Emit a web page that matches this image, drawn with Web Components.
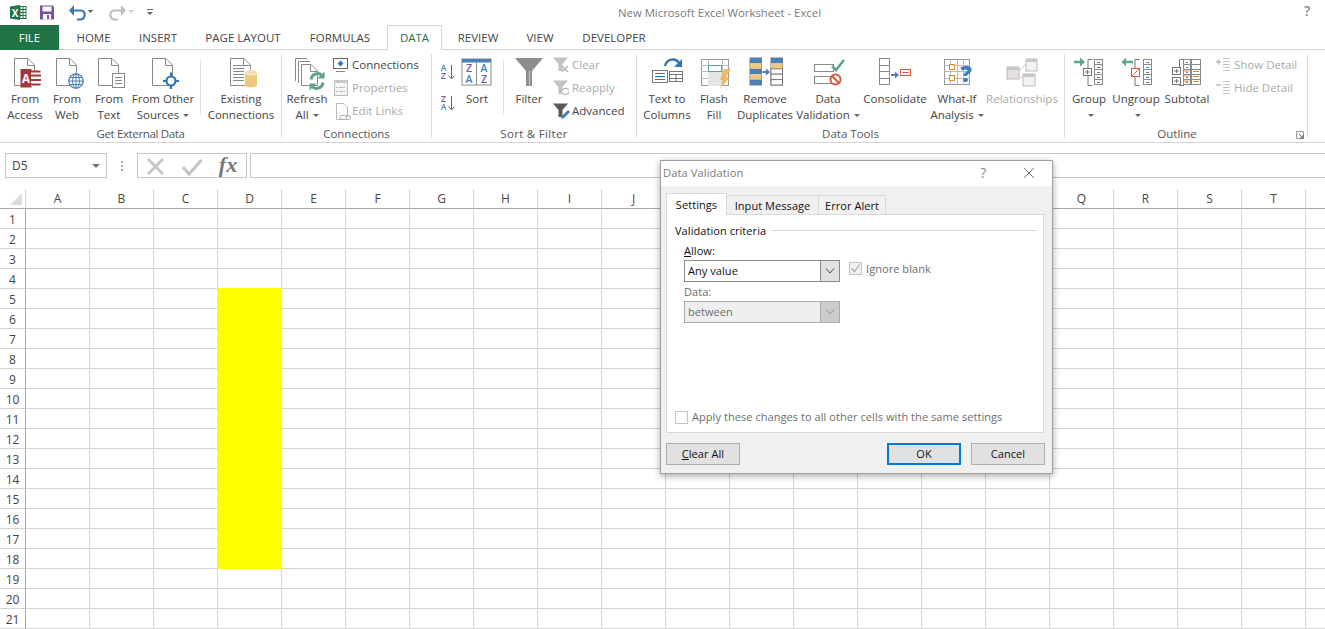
<!DOCTYPE html>
<html><head><meta charset="utf-8"><title>Excel</title>
<style>
html,body{margin:0;height:100%;background:#fff;overflow:hidden}
body{font-family:"Open Sans","Liberation Sans",sans-serif;font-size:11.5px;color:#444}
</style></head><body>
<xl-app>
  <xl-titlebar>New Microsoft Excel Worksheet - Excel</xl-titlebar>
  <xl-tabs>
    <xl-tab w="59" kind="file">FILE</xl-tab><xl-tab w="69">HOME</xl-tab><xl-tab w="60">INSERT</xl-tab><xl-tab w="110">PAGE LAYOUT</xl-tab><xl-tab w="84">FORMULAS</xl-tab><xl-tab w="55" kind="active" ml="5">DATA</xl-tab><xl-tab w="72">REVIEW</xl-tab><xl-tab w="52">VIEW</xl-tab><xl-tab w="96">DEVELOPER</xl-tab>
  </xl-tabs>
  <xl-ribbon>
    <xl-group w="282" pl="4" ls="-.35" label="Get External Data">
      <xl-cmd w="42" icon="access">From<br>Access</xl-cmd>
      <xl-cmd w="42" icon="web">From<br>Web</xl-cmd>
      <xl-cmd w="42" icon="text">From<br>Text</xl-cmd>
      <xl-cmd w="66" icon="other">From Other<br>Sources<xl-caret></xl-caret></xl-cmd>
      <xl-vsep ml="4" mr="3"></xl-vsep>
      <xl-cmd w="74" icon="existing">Existing<br>Connections</xl-cmd>
    </xl-group>
    <xl-group w="150" pl="2" label="Connections">
      <xl-cmd w="46" icon="refresh">Refresh<br>All<xl-caret></xl-caret></xl-cmd>
      <xl-stack ml="3">
        <xl-small icon="conn">Connections</xl-small>
        <xl-small icon="props" disabled>Properties</xl-small>
        <xl-small icon="links" disabled>Edit Links</xl-small>
      </xl-stack>
    </xl-group>
    <xl-group w="205" ls=".3" label="Sort &amp; Filter">
      <xl-sortstack></xl-sortstack>
      <xl-cmd w="30" icon="sort">Sort</xl-cmd>
      <xl-vsep ml="11" mr="6"></xl-vsep>
      <xl-cmd w="38" icon="filter">Filter</xl-cmd>
      <xl-stack ml="5">
        <xl-small icon="clear" disabled>Clear</xl-small>
        <xl-small icon="reapply" disabled>Reapply</xl-small>
        <xl-small icon="advanced">Advanced</xl-small>
      </xl-stack>
    </xl-group>
    <xl-group w="428" pl="5" label="Data Tools">
      <xl-cmd w="50" icon="t2c">Text to<br>Columns</xl-cmd>
      <xl-cmd w="44" icon="flash">Flash<br>Fill</xl-cmd>
      <xl-cmd w="58" icon="dup">Remove<br>Duplicates</xl-cmd>
      <xl-cmd w="64" ml="2" icon="valid">Data<br>Validation<xl-caret></xl-caret></xl-cmd>
      <xl-cmd w="70" icon="cons">Consolidate</xl-cmd>
      <xl-cmd w="54" icon="whatif">What-If<br>Analysis<xl-caret></xl-caret></xl-cmd>
      <xl-cmd w="76" icon="rel" disabled>Relationships</xl-cmd>
    </xl-group>
    <xl-group w="243" pl="3" pr="18" label="Outline" launcher>
      <xl-cmd w="42" icon="group">Group<br><xl-caret></xl-caret></xl-cmd>
      <xl-cmd w="52" icon="ungroup">Ungroup<br><xl-caret></xl-caret></xl-cmd>
      <xl-cmd w="50" icon="subtotal">Subtotal</xl-cmd>
      <xl-stack ml="3">
        <xl-small icon="show" disabled>Show Detail</xl-small>
        <xl-small icon="hide" disabled>Hide Detail</xl-small>
      </xl-stack>
    </xl-group>
  </xl-ribbon>
  <xl-formula>D5</xl-formula>
  <xl-sheet></xl-sheet>
  <xl-dialog></xl-dialog>
</xl-app>
<script>
const G='#8a8a8a';
const page=(x,y,w,h,c=G,f=7)=>`<path d="M${x+.5} ${y+.5}H${x+w-f}L${x+w-.5} ${y+f}V${y+h-.5}H${x+.5}Z" fill="#fff" stroke="${c}"/><path d="M${x+w-f-.5} ${y+.5}V${y+f+.5}H${x+w-.5}" fill="none" stroke="${c}"/>`;
const lines=(x1,x2,ys,c=G)=>ys.map(y=>`<path d="M${x1} ${y+.5}H${x2}" stroke="${c}"/>`).join('');
const rect=(x,y,w,h,s=G,f='#fff')=>`<rect x="${x+.5}" y="${y+.5}" width="${w-1}" height="${h-1}" fill="${f}" stroke="${s}"/>`;
const BL='#4a7fb8',OR='#e08a2e',RD='#d9573a',TN='#edc87e',GN='#5fa38a';
const L=(d,c,w=1)=>`<path d="${d}" fill="none" stroke="${c}" stroke-width="${w}"/>`;
const T=(x,y,s,c,size,extra='')=>`<text x="${x}" y="${y}" fill="${c}" font-size="${size}" font-family="Open Sans,Liberation Sans,sans-serif" text-anchor="middle" ${extra}>${s}</text>`;
const outlineCol=(x,y,w,h,n,dash)=>{let s=rect(x,y,w,h,'#8a8a8a');const rh=(h-1)/n;for(let i=1;i<n;i++)s+=L(`M${x} ${y+.5+Math.round(rh*i)}H${x+w}`,'#8a8a8a');if(dash)for(let i=0;i<n;i++)s+=L(`M${x+3} ${y+.5+Math.round(rh*i+rh/2)}H${x+w-3}`,BL,1);return s};
const ICONS={
access:page(5,2,21,28)+`<rect x="11.5" y="13" width="11" height="18.5" fill="#a4373a"/><rect x="22" y="15" width="10" height="15" fill="#fff"/><path d="M22 15.5h9.5M22 19.5h10M22 24h10M22 28.5h9.5" stroke="#a4373a" stroke-width="2"/>`+T(17,26.5,'A','#fff',11.5,'font-weight="700"'),
web:page(5,2,21,28)+`<circle cx="25" cy="25" r="7.2" fill="#fff" stroke="${BL}" stroke-width="1.3"/><ellipse cx="25" cy="25" rx="3.4" ry="7.2" fill="none" stroke="${BL}"/><path d="M25 18v14M18 25h14M19 21.5h12M19 28.5h12" stroke="${BL}"/>`,
text:page(5,2,21,28)+rect(19,17,13,15)+lines(22,29,[21,24,27]),
other:page(5,2,21,28)+`<circle cx="24" cy="25" r="4.5" fill="#fff" stroke="#2f75b5" stroke-width="2.2"/><path d="M16 25h3.5M28.500 25h3.500M24 16.500v3.500M24 29.500v3.500" stroke="#2f75b5" stroke-width="2.2"/>`,
existing:page(5,2,21,28)+lines(8,19,[9,12,15,18,21,24])+`<path d="M20 17v12c0 3 12 3 12 0V17z" fill="${TN}"/><ellipse cx="26" cy="16.500" rx="6" ry="2.500" fill="#f3d9a0" stroke="#fff" stroke-width=".8"/>`,
refresh:L('M4.500 25V2.500H16',G)+L('M7.500 27V5.500H19',G)+page(10,8,17,22)+`<path d="M20 23.500a6.500 6.500 0 0 1 11-4" fill="none" stroke="${GN}" stroke-width="3"/><path d="M33.500 15.500v7h-7z" fill="${GN}"/><path d="M32 26.500a6.500 6.500 0 0 1-11 4" fill="none" stroke="${GN}" stroke-width="3"/><path d="M18.500 34.500v-7h7z" fill="${GN}"/>`,
conn:rect(0,1,15,11,'#666')+`<path d="M3 14.500h9" stroke="#888"/><path d="M7.500 3.500l3 3-3 3-3-3z" fill="#2f75b5"/>`,
props:rect(1,0,14,16,'#bbb','#f4f4f4')+`<rect x="1" y="0" width="14" height="3" fill="#c8c8c8"/><path d="M6 7.500h6M6 11.500h6" stroke="#bbb"/><path d="M3 7.500h1.500M3 11.500h1.500" stroke="#aaa"/>`,
links:`<path d="M3.500 .5H11L14.500 4V14M8 16.500H3.500V.5" fill="#fff" stroke="#bbb"/><path d="M9 12.500h2.500a2 2 0 0 1 0 4H9a2 2 0 0 1 0-4zM13 12.500h2.500a2 2 0 0 1 0 4H13" fill="none" stroke="#aaa"/>`,
az:T(4.500,7,'A',"#3f7fc1",8.500,'font-weight="600"')+T(4.500,15,'Z','#7b4fa3',8.500,'font-weight="600"')+L('M12.500 1v13M9.500 11.500l3 3.500 3-3.500','#666'),
za:T(4.500,7,'Z','#7b4fa3',8.500,'font-weight="600"')+T(4.500,15,'A','#3f7fc1',8.500,'font-weight="600"')+L('M12.500 1v13M9.500 11.500l3 3.500 3-3.500','#666'),
sort:`<rect x="1" y="3" width="29" height="26" fill="#fff" stroke="#8a8a8a"/><rect x="1" y="3" width="29" height="3.500" fill="#4a7fb8"/><path d="M15.500 6v23" stroke="#8a8a8a"/>`+T(8,16,'Z','#7b4fa3',10.500,'font-weight="600"')+T(8,27,'A','#3f7fc1',10.500,'font-weight="600"')+T(23,16,'A','#3f7fc1',10.500,'font-weight="600"')+T(23,27,'Z','#7b4fa3',10.500,'font-weight="600"'),
filter:`<path d="M2 2h28L19 15v15h-6V15z" fill="#8c8c8c"/><path d="M16.500 15v15" stroke="#bdbdbd" stroke-width="1.500"/>`,
clear:`<path d="M0 .5h15L9.500 7v7h-4V7z" fill="#c2c2c2"/><path d="M9 9l6 6M15 9l-6 6" stroke="#b5b5b5" stroke-width="1.500"/>`,
reapply:`<path d="M0 .5h15L9.500 7v7h-4V7z" fill="#c2c2c2"/><path d="M9 11a4 4 0 0 1 7-1M16 12a4 4 0 0 1-7 1" stroke="#b5b5b5" fill="none" stroke-width="1.200"/>`,
advanced:`<path d="M0 .5h15L9.500 7v7h-4V7z" fill="#5a5a5a"/><path d="M8 16l1-3 6-6 2 2-6 6z" fill="#3e7cc0"/>`,
t2c:rect(1,14,16,13,'#777')+lines(4,14,[17,20,23],'#2f75b5')+rect(18,15,14,11,'#777')+`<path d="M18 18.500h14M18 22.500h14M25 18v8" stroke="#777"/><path d="M14 10c2-8 11-8 14-3" fill="none" stroke="#2f75b5" stroke-width="2.400"/><path d="M31 3v8h-8z" fill="#2f75b5"/>`,
flash:rect(3,3,28,27,'#999')+`<path d="M3 9.500h28M3 15.500h28M3 22.500h28M10.500 3v27M24.500 3v27" stroke="#bbb"/><rect x="10" y="16" width="14" height="14" fill="#e4e4e4"/>`+rect(10,9,14,7,'#5fa38a')+`<path d="M26 13h7l-5 8h4L22 33l3-9h-3z" fill="#f0b860"/>`,
dup:(()=>{const c=(x,a)=>{let s=`<rect x="${x}" y="2" width="11.500" height="27" fill="#fff" stroke="#7a7a7a"/>`;a.forEach((k,i)=>s+=`<rect x="${x}" y="${2+i*5.400}" width="11.500" height="5.400" fill="${k}" stroke="${k=='#fff'?'#7a7a7a':'none'}"/>`);return s};return c(1,[BL,TN,BL,TN,BL])+c(22,[BL,TN,'#fff','#fff','#fff'])+`<path d="M13.500 16h4" stroke="${BL}" stroke-width="2"/><path d="M17 12.500l4 3.500-4 3.500z" fill="${BL}"/>`})(),
valid:rect(2,8,20,8,G)+rect(2,20,20,8,G)+`<path d="M20 10l4 4 8-10" fill="none" stroke="${GN}" stroke-width="2.600"/><circle cx="23.500" cy="23.500" r="5" fill="#fff" stroke="${RD}" stroke-width="2"/><path d="M20 20l7 7" stroke="${RD}" stroke-width="2"/>`,
cons:outlineCol(0,2,11,27,4)+`<path d="M12 19h5" stroke="${BL}" stroke-width="2"/><path d="M16 15.500l4 3.500-4 3.500z" fill="${BL}"/>`+rect(21,13,11,7,RD)+L('M23.500 16.500h6',RD),
whatif:rect(3,3,26,26,'#999')+`<path d="M3 9.500h26M3 15.500h26M3 22.500h26M9.500 3v26M16.500 3v26M22.500 3v26" stroke="#bbb"/>`+rect(8,8,6,6,OR)+rect(8,19,6,6,OR)+T(25,26,'?','#3e7cc0',23,'font-weight="800"'),
rel:`<rect x="1" y="11" width="12" height="12" fill="#e6e0e6" stroke="#bbb"/><rect x="1" y="11" width="12" height="3" fill="#c8c8c8"/><rect x="20" y="3" width="11" height="12" fill="#f3f3f3" stroke="#bbb"/><rect x="20" y="3" width="11" height="3" fill="#c8c8c8"/><rect x="17" y="18" width="12" height="12" fill="#f3f3f3" stroke="#bbb"/><rect x="17" y="18" width="12" height="3" fill="#c8c8c8"/><path d="M13 15l7-7M13 19l4 4" stroke="#c8c8c8"/>`,
group:`<path d="M1 6h8" stroke="${GN}" stroke-width="2.500"/><path d="M7 1.500l5 4.500-5 4.500z" fill="${GN}"/>`+L('M19.500 3.500H15V12M15 20v9.500H19.500','#777')+rect(10,12,9,8,'#777')+L('M12 16h5M14.500 14v4','#777')+outlineCol(21,3,9,26,5,1),
ungroup:`<path d="M4 6h9" stroke="${GN}" stroke-width="2.500"/><path d="M6 1.500L1.500 6 6 10.500z" fill="${GN}"/>`+L('M19.500 3.500H15V12M15 20v9.500H19.500','#777')+rect(11,12,9,9,RD)+L('M12 20l7-7',RD)+outlineCol(23,3,9,26,5,1),
subtotal:L('M8.500 11V3.500H13M8.500 21v8.500H13','#777')+rect(1,11,9,8,'#777')+L('M3 15h5M5.500 13v4','#777')+rect(1,21,9,8,'#777')+L('M3 25h5M5.500 23v4','#777')+outlineCol(12,3,8,26,5,1)+rect(20,3,10,26,'#8a8a8a')+`<path d="M20 8.500h10M20 13.500h10M20 18.500h10M20 23.500h10" stroke="#8a8a8a"/><path d="M22 15.500h6M22 20.500h6M22 25.500h6" stroke="${OR}"/>`+`<path d="M12.500 15h6M12.500 20h6M12.500 25h6" stroke="${OR}"/>`,
show:`<path d="M1 5h5M3.500 2.500v5" stroke="#bbb" stroke-width="1.500"/>`+lines(8,15,[1,4,7,10,13],'#c4c4c4'),
hide:`<path d="M1 5h5" stroke="#bbb" stroke-width="1.500"/>`+lines(8,15,[1,4,7,10,13],'#c4c4c4'),
};
function def(name,css,html,init){customElements.define(name,class extends HTMLElement{
  constructor(){super();this.attachShadow({mode:'open'})}
  connectedCallback(){const a=n=>this.getAttribute(n);this.shadowRoot.innerHTML=`<style>${css}</style>`+(typeof html=='function'?html(a,this):html);init&&init(this,a)}
})}
def('xl-app',':host{display:block;position:relative;width:1325px;height:629px;overflow:hidden}','<slot></slot>');
def('xl-titlebar',`:host{display:flex;align-items:center;height:25px;position:relative;color:#7a7a7a;font-size:11.35px}
 svg{display:block;overflow:visible}.t{margin-left:466px;width:205px;text-align:center;white-space:nowrap}.h{margin-left:482px;margin-top:-4px;font-size:14px;font-weight:600;color:#888}
 .q{display:flex;align-items:center;margin-left:9px;gap:0}`,
 `<div class="q"><svg width="142" height="20" viewBox="0 0 142 20">
 <rect x="9" y="2" width="8" height="14" fill="#fff"/><rect x="11" y="3.500" width="6" height="12" fill="#fff" stroke="#217346"/><path d="M11 6.500h6M11 9.500h6M11 12.500h6M14 3.500v12" stroke="#217346"/>
 <path d="M1 3.500L11 2v15L1 15.500z" fill="#217346"/><text x="6" y="13.500" fill="#fff" font-size="10" font-weight="700" text-anchor="middle" font-family="Open Sans,sans-serif">X</text>
 <path d="M31 2.500h12.500l1.500 1.500v12.500H31z" fill="#7d4f9f"/><rect x="33.500" y="3.500" width="9" height="5" fill="#fff"/><rect x="34" y="11" width="8" height="5.500" fill="#fff"/><rect x="38" y="12" width="2" height="4" fill="#7d4f9f"/>
 <path d="M64 7.500h8c5 0 5 9 -1 9h-3" fill="none" stroke="#3a76b8" stroke-width="2.200"/><path d="M65 2L60 7.500 65 13z" fill="#3a76b8"/>
 <path d="M78.500 8l3 3 3-3z" transform="translate(0 -1)" fill="#666"/>
 <path d="M113 7.500h-8c-5 0-5 9 1 9h3" fill="none" stroke="#bdbdbd" stroke-width="2.200"/><path d="M112 2l5 5.500-5 5.500z" fill="#bdbdbd"/>
 <path d="M119.500 8l3 3 3-3z" transform="translate(0 -1)" fill="#ccc"/>
 <path d="M138 6.500h6" stroke="#666"/><path d="M138 9l3 3 3-3z" fill="#666"/></svg></div>
 <div class="t"><slot></slot></div><div class="h">?</div>`);
def('xl-tabs',':host{display:flex;height:25px;box-sizing:border-box;border-bottom:1px solid #d4d4d4;font-size:11.5px}','<slot></slot>');
def('xl-tab',`:host{display:flex;align-items:center;justify-content:center;height:25px;box-sizing:border-box;color:#444;white-space:nowrap;padding-bottom:1px}
 :host([kind=file]){background:#217346;color:#fff}
 :host([kind=active]){color:#217346;background:#fff;border:1px solid #d4d4d4;border-bottom:0;height:25px;z-index:1}`,
 '<slot></slot>',(e,a)=>{e.style.width=a('w')+'px';if(a('ml'))e.style.marginLeft=a('ml')+'px'});
def('xl-ribbon',':host{display:flex;height:93px;box-sizing:border-box;padding-top:4px;border-bottom:1px solid #d4d4d4;background:#fff}','<slot></slot>');
def('xl-group',`:host{display:flex;flex-direction:column;height:84px;box-sizing:border-box;border-right:1px solid #dadada;flex:none;position:relative}
 .c{display:flex;flex:1;min-height:0}.l{height:16px;line-height:16px;margin-bottom:-4px;text-align:center;color:#555;white-space:nowrap}
 svg{position:absolute;right:3px;bottom:-1px}`,
 (a)=>`<div class="c" style="padding-left:${a('pl')||0}px"><slot></slot></div><div class="l" style="padding-right:${a('pr')||0}px;letter-spacing:${a('ls')||0}px">${a('label').replace('&','&amp;')}</div>`+(a('launcher')!==null?`<svg width="8" height="8" viewBox="0 0 8 8"><path d="M.5 .5H7.500V7.500H.5Z" fill="none" stroke="#999"/><path d="M3 3l4 4M7 4v3H4" stroke="#666" fill="none"/></svg>`:''),
 (e,a)=>{e.style.width=a('w')+'px'});
def('xl-cmd',`:host{display:flex;flex-direction:column;align-items:center;flex:none;color:#444}
 :host([disabled]){color:#aaa}svg{display:block;margin-top:2px;overflow:visible;flex:none}
 .t{margin-top:3px;line-height:16px;white-space:nowrap;text-align:center}`,
 (a)=>`<svg width="32" height="32" viewBox="0 0 32 32">${ICONS[a('icon')]}</svg><div class="t"><slot></slot></div>`,
 (e,a)=>{e.style.width=a('w')+'px';if(a('ml'))e.style.marginLeft=a('ml')+'px'});
def('xl-caret',':host{display:inline-block;width:0;height:0;margin-left:4px;vertical-align:2px;border:3px solid transparent;border-top:3px solid #666;border-bottom:0}','');
def('xl-vsep',':host{display:block;flex:none;width:1px;height:55px;margin-top:6px;background:#e0e0e0}','',(e,a)=>{e.style.marginLeft=a('ml')+'px';e.style.marginRight=a('mr')+'px'});
def('xl-stack',':host{display:flex;flex-direction:column;flex:none;margin-top:-1px}','<slot></slot>',(e,a)=>{e.style.marginLeft=a('ml')+'px'});
def('xl-small',`:host{display:flex;align-items:center;height:23px;gap:3px;white-space:nowrap;color:#444}
 :host([disabled]){color:#aaa}svg{flex:none;overflow:visible;display:block}`,
 (a)=>`<svg width="16" height="16" viewBox="0 0 16 16">${ICONS[a('icon')]}</svg><slot></slot>`);
def('xl-sortstack',`:host{display:flex;flex-direction:column;align-items:center;width:30px;flex:none;margin-top:2px}
 div{height:31px;display:flex;align-items:center}svg{display:block;overflow:visible}`,
 `<div><svg width="16" height="16" viewBox="0 0 16 16">${ICONS.az}</svg></div><div><svg width="16" height="16" viewBox="0 0 16 16">${ICONS.za}</svg></div>`);
def('xl-formula',`:host{display:flex;height:25px;margin-top:10px;padding-left:5px;box-sizing:content-box;font-size:12px;color:#444}
 .n,.b,.i{box-sizing:border-box;height:25px;border:1px solid #c6c6c6;background:#fff}
 .n{width:102px;display:flex;align-items:center;justify-content:space-between;padding:0 6px 0 6px}
 .n i{width:0;height:0;border:4px solid transparent;border-top:4px solid #777;border-bottom:0}
 .d{width:30px;display:flex;flex-direction:column;align-items:center;justify-content:center;gap:2px}.d i{width:2px;height:2px;background:#aaa;display:block}
 .b{width:110px;display:flex;align-items:center}.b svg{display:block;overflow:visible}.i{flex:1;margin-left:3px;border-right:0}`,
 `<div class="n"><span><slot></slot></span><i></i></div><div class="d"><i></i><i></i><i></i></div>
 <div class="b"><svg width="108" height="23" viewBox="0 0 108 23"><path d="M10 5l15 15M25 5L10 20" stroke="#c4c4c4" stroke-width="2.600" fill="none"/><path d="M45 13l6 7L63.500 6" stroke="#c4c4c4" stroke-width="3.200" fill="none"/><text x="90" y="17.500" font-family="Liberation Serif,serif" font-style="italic" font-weight="700" font-size="22" fill="#777" text-anchor="middle">fx</text></svg></div><div class="i"></div>`);
def('xl-sheet',`:host{display:block;margin-top:11px;height:440px;overflow:hidden}
 .g{display:grid;grid-template-columns:26px repeat(21,64px);grid-auto-rows:20px;width:1370px;font-size:12px;color:#444}
 .g>div{box-sizing:border-box;border-right:1px solid #d4d4d4;border-bottom:1px solid #d4d4d4;display:flex;align-items:center;justify-content:center}
 .ch{border-bottom-color:#a6a6a6!important}.rh{border-right-color:#a6a6a6!important;padding-top:1px}
 .corner{position:relative;border-right-color:#d4d4d4!important}
 .corner::after{content:"";position:absolute;left:10px;top:4px;width:0;height:0;border-style:solid;border-width:0 0 12px 12px;border-color:transparent transparent #dcdcdc transparent}
 .y{background:#ff0;border-color:#ff0!important;box-shadow:-1px 0 0 #ff0,0 -1px 0 #ff0,-1px -1px 0 #ff0}`,
 ()=>{const C='ABCDEFGHIJKLMNOPQRSTU'.split('');const hide='KLMNOPU';let s='<div class="g"><div class="ch corner"></div>';C.forEach(c=>s+=`<div class="ch">${hide.includes(c)?'':c}</div>`);
 for(let r=1;r<=21;r++){s+=`<div class="rh">${r}</div>`;C.forEach(c=>{s+=`<div${c=='D'&&r>=5&&r<=18?' class="y"':''}></div>`})}return s+'</div>'});
def('xl-check',`:host{display:flex;align-items:center;color:#6d6d6d;white-space:nowrap}
 .b{width:13px;height:13px;box-sizing:border-box;border:1px solid #c4c4c4;margin-right:4px;display:block;flex:none;background:#fff}
 :host([checked]) .b{background:#f0f0f0}svg{display:block}`,
 (a)=>`<span class="b">${a('checked')!==null?'<svg width="11" height="11" viewBox="0 0 11 11"><path d="M1.500 5.500l3 3 5-7" fill="none" stroke="#a8a8a8" stroke-width="1.200"/></svg>':''}</span><slot></slot>`);
def('xl-select',`:host{display:flex;width:156px;height:22px;box-sizing:border-box;border:1px solid #8a8a8a;background:#fff;color:#111}
 :host([disabled]){border-color:#adadad;background:#efefef;color:#6d6d6d}
 .v{flex:1;line-height:20px;padding-left:3px}.a{width:18px;background:#e1e1e1;border-left:1px solid #8a8a8a;display:flex;align-items:center;justify-content:center}
 :host([disabled]) .a{background:#ccc;border-left-color:#adadad}svg{display:block}`,
 (a)=>`<div class="v"><slot></slot></div><div class="a"><svg width="10" height="6" viewBox="0 0 10 6"><path d="M1 .5l4 4.500 4-4.500" fill="none" stroke="${a('disabled')!==null?'#999':'#444'}" stroke-width="1"/></svg></div>`);
def('xl-dbtn',`:host{display:flex;align-items:center;justify-content:center;width:74px;height:22px;box-sizing:border-box;border:1px solid #adadad;background:#e1e1e1;color:#111;padding-bottom:1px}
 :host([primary]){border:2px solid #0078d7}`,'<slot></slot>');
def('xl-dlgtab',`:host{display:flex;align-items:center;justify-content:center;box-sizing:border-box;height:19px;margin-top:2px;border:1px solid #d9d9d9;border-bottom:0;background:#f0f0f0;color:#111;white-space:nowrap;margin-left:-1px}
 :host([active]){height:22px;margin-top:0;background:#fff;margin-left:0;margin-bottom:-1px;z-index:1;position:relative}`,'<slot></slot>',(e,a)=>{e.style.width=a('w')+'px'});
def('xl-dialog',`:host{position:absolute;left:660px;top:160px;width:393px;height:314px;box-sizing:border-box;border:1px solid #a0a0a0;background:#f0f0f0;box-shadow:0 2px 7px rgba(0,0,0,.35);display:flex;flex-direction:column;font-size:11px;letter-spacing:.06px;color:#111}
 .tb{height:25px;background:#fff;display:flex;align-items:center;color:#7a7a7a;padding:0 0 2px 2px;box-sizing:border-box;font-size:11.2px;flex:none}
 .tb b{font-weight:400;font-size:14px;margin-left:230px;width:20px;text-align:center;color:#888}.tb svg{margin-left:30px;display:block}
 .tabs{display:flex;margin:7px 0 0 5px;flex:none;align-items:flex-start;height:21px}
 .p{flex:none;height:219px;margin:0 0 0 5px;width:378px;box-sizing:border-box;border:1px solid #d9d9d9;background:#fff;padding:8px 0 7px 8px;display:flex;flex-direction:column}
 .h{display:flex;align-items:center;line-height:16px;padding-right:6px}.h i{flex:1;height:1px;background:#d9d9d9;margin-left:5px;margin-top:-1px}
 .lb{line-height:16px;margin:4px 0 1px 9px}.d{color:#6d6d6d;margin:2px 0 1px 9px}
 .row{display:flex;margin-left:9px}.row xl-check{margin:2px 0 0 9px;height:13px;line-height:13px}
 .ap{margin-top:auto;line-height:16px}
 .f{display:flex;margin:10px 0 0 5px;width:379px;flex:none}.sp{flex:1}`,
 `<div class="tb">Data Validation<b>?</b><svg width="12" height="12" viewBox="0 0 12 12"><path d="M1 1l10 10M11 1L1 11" stroke="#777"/></svg></div>
 <div class="tabs"><xl-dlgtab w="61" active>Settings</xl-dlgtab><xl-dlgtab w="93">Input Message</xl-dlgtab><xl-dlgtab w="68">Error Alert</xl-dlgtab></div>
 <div class="p"><div class="h">Validation criteria<i></i></div>
 <div class="lb"><u>A</u>llow:</div><div class="row"><xl-select>Any value</xl-select><xl-check checked>Ignore blank</xl-check></div>
 <div class="lb d">Data:</div><div class="row"><xl-select disabled>between</xl-select></div>
 <xl-check class="ap">Apply these changes to all other cells with the same settings</xl-check></div>
 <div class="f"><xl-dbtn><span><u>C</u>lear All</span></xl-dbtn><div class="sp"></div><xl-dbtn primary>OK</xl-dbtn><xl-dbtn style="margin-left:10px">Cancel</xl-dbtn></div>`);
</script>
</body></html>
